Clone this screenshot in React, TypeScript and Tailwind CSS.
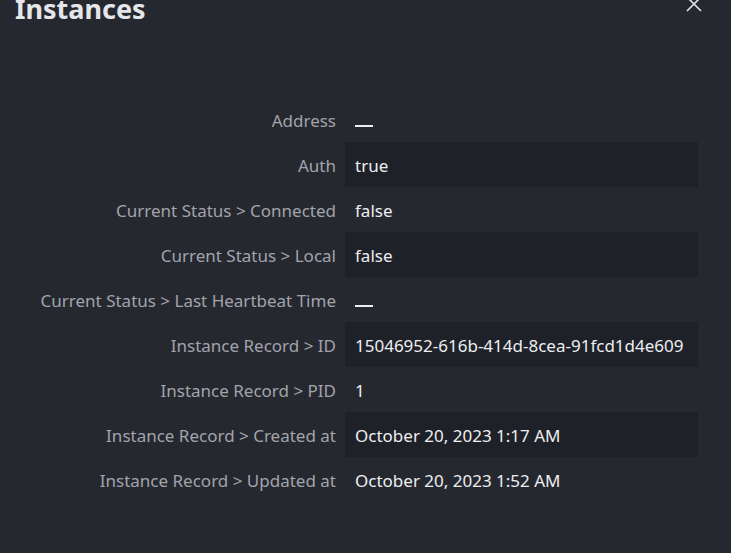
import React from "react";

const rows: [string, string | null][] = [
  ["Address", null],
  ["Auth", "true"],
  ["Current Status > Connected", "false"],
  ["Current Status > Local", "false"],
  ["Current Status > Last Heartbeat Time", null],
  ["Instance Record > ID", "15046952-616b-414d-8cea-91fcd1d4e609"],
  ["Instance Record > PID", "1"],
  ["Instance Record > Created at", "October 20, 2023 1:17 AM"],
  ["Instance Record > Updated at", "October 20, 2023 1:52 AM"],
];

export default function App() {
  return (
    <div
      className="relative w-[731px] h-[553px] overflow-hidden bg-[#262830]"
      style={{ fontFamily: '"Noto Sans", "Open Sans", sans-serif' }}
    >
      <div className="flex items-start justify-between pl-[15px] pr-[28px] -mt-[9px]">
        <h1 className="text-[27px] leading-[36px] font-bold text-[#e4e6ea]">Instances</h1>
        <button className="mt-[4px] text-[#e4e6ea]">
          <svg width="18" height="18" viewBox="0 0 18 18" fill="none" stroke="currentColor" strokeWidth="1.6">
            <path d="M2 2 L16 16 M16 2 L2 16" />
          </svg>
        </button>
      </div>
      <div className="mt-[70px] flex flex-col">
        {rows.map(([label, value], i) => (
          <div key={label} className="flex h-[45px]">
            <div className="w-[345px] pr-[9px] pt-[2px] flex items-center justify-end text-[17px] text-[#a1a4ab] whitespace-nowrap">
              {label}
            </div>
            <div
              className={`w-[353px] pl-[10px] pt-[2px] flex items-center text-[17px] text-[#eceef1] whitespace-nowrap ${
                i % 2 === 1 ? "bg-[#1f2128]" : ""
              }`}
            >
              {value === null ? (
                <span className="inline-block w-[18px] h-[2px] bg-[#eceef1] mt-[10px]" />
              ) : (
                value
              )}
            </div>
          </div>
        ))}
      </div>
    </div>
  );
}
